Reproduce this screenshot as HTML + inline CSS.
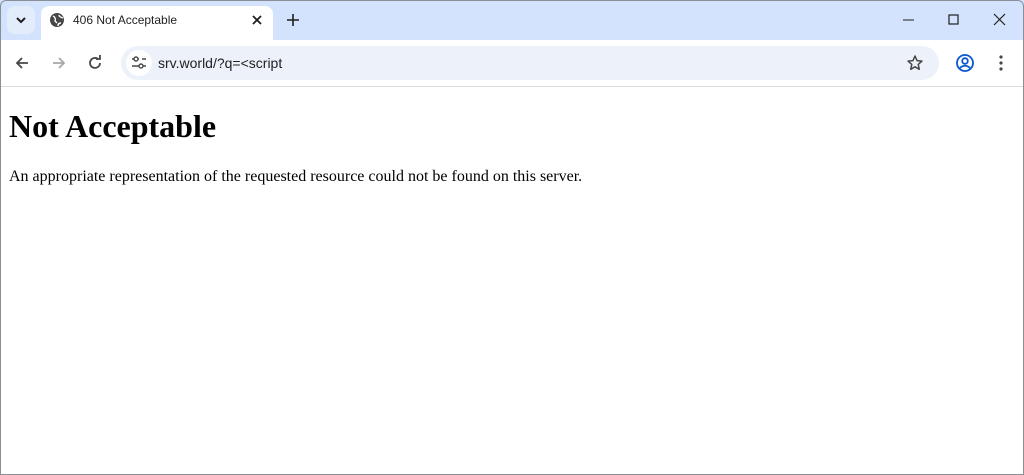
<!DOCTYPE html>
<html><head><style>
body{margin:0;width:1024px;height:475px;overflow:hidden;background:#fff;position:relative;font-family:"Liberation Sans",sans-serif}
.top{position:absolute;left:0;top:0;width:1024px;height:40px;background:#d3e3fd}
.tb{position:absolute;left:0;top:40px;width:1024px;height:46px;background:#fff;border-bottom:1px solid #dadce0}
.tab{position:absolute;left:41px;top:6px;width:232px;height:34px;background:#fff;border-radius:8px 8px 0 0}
.dd{position:absolute;left:7px;top:6px;width:28px;height:28px;background:#e3ecfb;border-radius:8px}
.omni{position:absolute;left:121px;top:46px;width:818px;height:34px;background:#edf2fa;border-radius:17px}
svg{position:absolute}
.frame{position:absolute;left:0;top:0;width:1022px;height:473px;border:1px solid #8a8f96;border-radius:6px 6px 0 0;pointer-events:none}
</style></head><body>
<div class="top"></div>
<div class="dd"></div>
<svg style="left:14px;top:14px" width="14" height="12"><path d="M3 4l4 4 4-4" stroke="#1f1f1f" stroke-width="2" fill="none"/></svg>
<div class="tab"></div>
<svg style="left:50px;top:13px" width="14" height="14"><circle cx="7" cy="7" r="7" fill="#474747"/><path d="M3 3c2 1 3 3 2 5l2 2M9 2c0 2 2 2 4 3M8 13c0-2 1-3 3-3" stroke="#fff" stroke-width="1.4" fill="none"/></svg>
<div style="position:absolute;left:73px;top:13px;font-size:12px;color:#1f1f1f">406 Not Acceptable</div>
<svg style="left:251px;top:14px" width="12" height="12"><path d="M2 2l8 8M10 2l-8 8" stroke="#1f1f1f" stroke-width="1.8"/></svg>
<svg style="left:286px;top:13px" width="14" height="14"><path d="M7 1v12M1 7h12" stroke="#1f1f1f" stroke-width="1.6"/></svg>
<svg style="left:903px;top:19px" width="12" height="2"><path d="M0 1h11" stroke="#1f1f1f" stroke-width="1"/></svg>
<svg style="left:948px;top:14px" width="12" height="12"><rect x="1" y="1" width="9" height="9" stroke="#1f1f1f" fill="none" stroke-width="1.2"/></svg>
<svg style="left:993px;top:13px" width="13" height="13"><path d="M1 1l11 11M12 1l-11 11" stroke="#1f1f1f" stroke-width="1.2"/></svg>
<div class="tb"></div>
<svg style="left:14px;top:55px" width="16" height="16"><path d="M14 8H3M8 3L3 8l5 5" stroke="#474747" stroke-width="1.8" fill="none"/></svg>
<svg style="left:51px;top:55px" width="16" height="16"><path d="M2 8h11M8 3l5 5-5 5" stroke="#a8a8a8" stroke-width="1.8" fill="none"/></svg>
<svg style="left:87px;top:55px" width="16" height="16"><path d="M13 8a5 5 0 1 1-1.5-3.6" stroke="#474747" stroke-width="1.8" fill="none"/><path d="M9 4h4V0" stroke="#474747" stroke-width="1.8" fill="none"/></svg>
<div class="omni"></div>
<div style="position:absolute;left:126px;top:50px;width:26px;height:26px;border-radius:13px;background:#fff"></div>
<svg style="left:131px;top:55px" width="16" height="16"><path d="M1 4h7M1 11h7M11 4h4M11 11h4" stroke="#474747" stroke-width="1.6"/><circle cx="5" cy="4" r="2" fill="#fff" stroke="#474747" stroke-width="1.4"/><circle cx="10" cy="11" r="2" fill="#fff" stroke="#474747" stroke-width="1.4"/></svg>
<div style="position:absolute;left:158px;top:55px;font-size:14px;color:#1f1f1f">srv.world/?q=&lt;script</div>
<svg style="left:906px;top:54px" width="18" height="18"><path d="M9 2l2 4.6 5 .5-3.8 3.3 1.1 4.9L9 12.8 4.7 15.3l1.1-4.9L2 7.1l5-.5z" stroke="#474747" stroke-width="1.5" fill="none" stroke-linejoin="round"/></svg>
<svg style="left:955px;top:53px" width="20" height="20"><circle cx="10" cy="10" r="8" stroke="#0b57d0" stroke-width="1.8" fill="none"/><circle cx="10" cy="8" r="2.8" stroke="#0b57d0" stroke-width="1.8" fill="none"/><path d="M5 15c3-3 7-3 10 0" stroke="#0b57d0" stroke-width="1.8" fill="none"/></svg>
<svg style="left:998px;top:55px" width="6" height="16"><circle cx="3" cy="2" r="1.6" fill="#474747"/><circle cx="3" cy="8" r="1.6" fill="#474747"/><circle cx="3" cy="14" r="1.6" fill="#474747"/></svg>
<div style="position:absolute;left:9px;top:108px;font-family:'Liberation Serif',serif;font-weight:bold;font-size:32px;color:#000">Not Acceptable</div>
<div style="position:absolute;left:9px;top:168px;font-family:'Liberation Serif',serif;font-size:16px;color:#000">An appropriate representation of the requested resource could not be found on this server.</div>
<div class="frame"></div>
</body></html>
